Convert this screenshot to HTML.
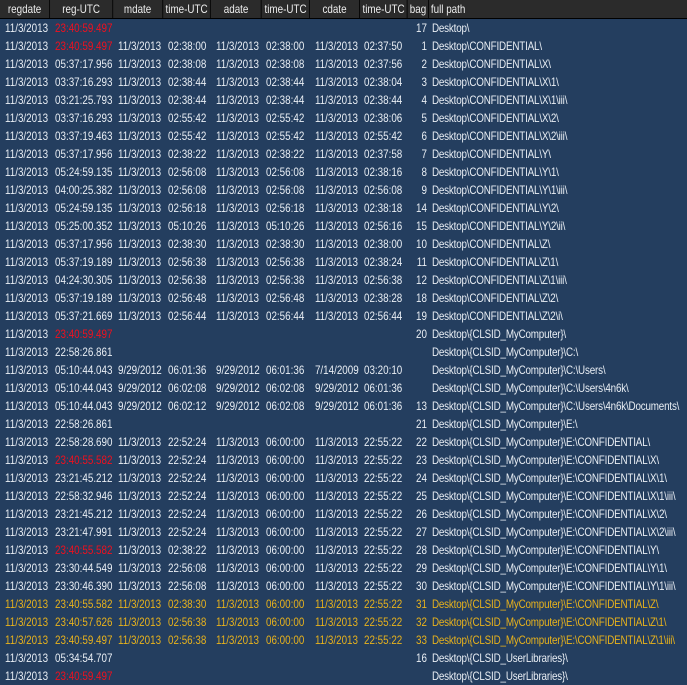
<!DOCTYPE html>
<html><head><style>
html,body{margin:0;padding:0;background:#243e5f;width:687px;height:685px;overflow:hidden}
#w{width:838px;transform:scaleX(0.82);transform-origin:0 0;font-family:"Liberation Sans",sans-serif;font-size:12px;color:#e9eef4}
.h,.r0{display:flex;white-space:nowrap}
.h{background:#2b2b2b;height:19px;line-height:18px;color:#eee;border-bottom:1px solid #000;box-sizing:border-box}
.h span{border-right:1.2px solid #000;text-align:center;box-sizing:border-box}
.h span:last-child{border-right:none;text-align:left;padding-left:2.4px}
.r0{height:18px;line-height:18px}
span{display:block;overflow:hidden;flex:none}
span:nth-child(1){width:61px}span:nth-child(2){width:76.8px}span:nth-child(3){width:61px}span:nth-child(4){width:58.5px}
span:nth-child(5){width:62.2px}span:nth-child(6){width:58.5px}span:nth-child(7){width:61px}span:nth-child(8){width:58.5px}
span:nth-child(9){width:25.6px}span:nth-child(10){width:314.6px}
.r0 span{padding-left:6.1px;box-sizing:border-box}
.r0 span:nth-child(6),.r0 span:nth-child(8){padding-left:4.9px}
.r0 span:nth-child(9){text-align:right;padding:0 2.4px 0 0}
.r0 span:nth-child(10){padding-left:3.7px;overflow:visible;letter-spacing:-0.22px}
.r{color:#f0101e}
.y{color:#e8b21c}
</style></head><body><div id="w">
<div class="h"><span>regdate</span><span>reg-UTC</span><span>mdate</span><span>time-UTC</span><span>adate</span><span>time-UTC</span><span>cdate</span><span>time-UTC</span><span>bag</span><span>full path</span></div>
<div class="r0"><span>11/3/2013</span><span class="r">23:40:59.497</span><span></span><span></span><span></span><span></span><span></span><span></span><span>17</span><span>Desktop\</span></div>
<div class="r0"><span>11/3/2013</span><span class="r">23:40:59.497</span><span>11/3/2013</span><span>02:38:00</span><span>11/3/2013</span><span>02:38:00</span><span>11/3/2013</span><span>02:37:50</span><span>1</span><span>Desktop\CONFIDENTIAL\</span></div>
<div class="r0"><span>11/3/2013</span><span>05:37:17.956</span><span>11/3/2013</span><span>02:38:08</span><span>11/3/2013</span><span>02:38:08</span><span>11/3/2013</span><span>02:37:56</span><span>2</span><span>Desktop\CONFIDENTIAL\X\</span></div>
<div class="r0"><span>11/3/2013</span><span>03:37:16.293</span><span>11/3/2013</span><span>02:38:44</span><span>11/3/2013</span><span>02:38:44</span><span>11/3/2013</span><span>02:38:04</span><span>3</span><span>Desktop\CONFIDENTIAL\X\1\</span></div>
<div class="r0"><span>11/3/2013</span><span>03:21:25.793</span><span>11/3/2013</span><span>02:38:44</span><span>11/3/2013</span><span>02:38:44</span><span>11/3/2013</span><span>02:38:44</span><span>4</span><span>Desktop\CONFIDENTIAL\X\1\iii\</span></div>
<div class="r0"><span>11/3/2013</span><span>03:37:16.293</span><span>11/3/2013</span><span>02:55:42</span><span>11/3/2013</span><span>02:55:42</span><span>11/3/2013</span><span>02:38:06</span><span>5</span><span>Desktop\CONFIDENTIAL\X\2\</span></div>
<div class="r0"><span>11/3/2013</span><span>03:37:19.463</span><span>11/3/2013</span><span>02:55:42</span><span>11/3/2013</span><span>02:55:42</span><span>11/3/2013</span><span>02:55:42</span><span>6</span><span>Desktop\CONFIDENTIAL\X\2\iii\</span></div>
<div class="r0"><span>11/3/2013</span><span>05:37:17.956</span><span>11/3/2013</span><span>02:38:22</span><span>11/3/2013</span><span>02:38:22</span><span>11/3/2013</span><span>02:37:58</span><span>7</span><span>Desktop\CONFIDENTIAL\Y\</span></div>
<div class="r0"><span>11/3/2013</span><span>05:24:59.135</span><span>11/3/2013</span><span>02:56:08</span><span>11/3/2013</span><span>02:56:08</span><span>11/3/2013</span><span>02:38:16</span><span>8</span><span>Desktop\CONFIDENTIAL\Y\1\</span></div>
<div class="r0"><span>11/3/2013</span><span>04:00:25.382</span><span>11/3/2013</span><span>02:56:08</span><span>11/3/2013</span><span>02:56:08</span><span>11/3/2013</span><span>02:56:08</span><span>9</span><span>Desktop\CONFIDENTIAL\Y\1\iii\</span></div>
<div class="r0"><span>11/3/2013</span><span>05:24:59.135</span><span>11/3/2013</span><span>02:56:18</span><span>11/3/2013</span><span>02:56:18</span><span>11/3/2013</span><span>02:38:18</span><span>14</span><span>Desktop\CONFIDENTIAL\Y\2\</span></div>
<div class="r0"><span>11/3/2013</span><span>05:25:00.352</span><span>11/3/2013</span><span>05:10:26</span><span>11/3/2013</span><span>05:10:26</span><span>11/3/2013</span><span>02:56:16</span><span>15</span><span>Desktop\CONFIDENTIAL\Y\2\ii\</span></div>
<div class="r0"><span>11/3/2013</span><span>05:37:17.956</span><span>11/3/2013</span><span>02:38:30</span><span>11/3/2013</span><span>02:38:30</span><span>11/3/2013</span><span>02:38:00</span><span>10</span><span>Desktop\CONFIDENTIAL\Z\</span></div>
<div class="r0"><span>11/3/2013</span><span>05:37:19.189</span><span>11/3/2013</span><span>02:56:38</span><span>11/3/2013</span><span>02:56:38</span><span>11/3/2013</span><span>02:38:24</span><span>11</span><span>Desktop\CONFIDENTIAL\Z\1\</span></div>
<div class="r0"><span>11/3/2013</span><span>04:24:30.305</span><span>11/3/2013</span><span>02:56:38</span><span>11/3/2013</span><span>02:56:38</span><span>11/3/2013</span><span>02:56:38</span><span>12</span><span>Desktop\CONFIDENTIAL\Z\1\iii\</span></div>
<div class="r0"><span>11/3/2013</span><span>05:37:19.189</span><span>11/3/2013</span><span>02:56:48</span><span>11/3/2013</span><span>02:56:48</span><span>11/3/2013</span><span>02:38:28</span><span>18</span><span>Desktop\CONFIDENTIAL\Z\2\</span></div>
<div class="r0"><span>11/3/2013</span><span>05:37:21.669</span><span>11/3/2013</span><span>02:56:44</span><span>11/3/2013</span><span>02:56:44</span><span>11/3/2013</span><span>02:56:44</span><span>19</span><span>Desktop\CONFIDENTIAL\Z\2\i\</span></div>
<div class="r0"><span>11/3/2013</span><span class="r">23:40:59.497</span><span></span><span></span><span></span><span></span><span></span><span></span><span>20</span><span>Desktop\{CLSID_MyComputer}\</span></div>
<div class="r0"><span>11/3/2013</span><span>22:58:26.861</span><span></span><span></span><span></span><span></span><span></span><span></span><span></span><span>Desktop\{CLSID_MyComputer}\C:\</span></div>
<div class="r0"><span>11/3/2013</span><span>05:10:44.043</span><span>9/29/2012</span><span>06:01:36</span><span>9/29/2012</span><span>06:01:36</span><span>7/14/2009</span><span>03:20:10</span><span></span><span>Desktop\{CLSID_MyComputer}\C:\Users\</span></div>
<div class="r0"><span>11/3/2013</span><span>05:10:44.043</span><span>9/29/2012</span><span>06:02:08</span><span>9/29/2012</span><span>06:02:08</span><span>9/29/2012</span><span>06:01:36</span><span></span><span>Desktop\{CLSID_MyComputer}\C:\Users\4n6k\</span></div>
<div class="r0"><span>11/3/2013</span><span>05:10:44.043</span><span>9/29/2012</span><span>06:02:12</span><span>9/29/2012</span><span>06:02:08</span><span>9/29/2012</span><span>06:01:36</span><span>13</span><span>Desktop\{CLSID_MyComputer}\C:\Users\4n6k\Documents\</span></div>
<div class="r0"><span>11/3/2013</span><span>22:58:26.861</span><span></span><span></span><span></span><span></span><span></span><span></span><span>21</span><span>Desktop\{CLSID_MyComputer}\E:\</span></div>
<div class="r0"><span>11/3/2013</span><span>22:58:28.690</span><span>11/3/2013</span><span>22:52:24</span><span>11/3/2013</span><span>06:00:00</span><span>11/3/2013</span><span>22:55:22</span><span>22</span><span>Desktop\{CLSID_MyComputer}\E:\CONFIDENTIAL\</span></div>
<div class="r0"><span>11/3/2013</span><span class="r">23:40:55.582</span><span>11/3/2013</span><span>22:52:24</span><span>11/3/2013</span><span>06:00:00</span><span>11/3/2013</span><span>22:55:22</span><span>23</span><span>Desktop\{CLSID_MyComputer}\E:\CONFIDENTIAL\X\</span></div>
<div class="r0"><span>11/3/2013</span><span>23:21:45.212</span><span>11/3/2013</span><span>22:52:24</span><span>11/3/2013</span><span>06:00:00</span><span>11/3/2013</span><span>22:55:22</span><span>24</span><span>Desktop\{CLSID_MyComputer}\E:\CONFIDENTIAL\X\1\</span></div>
<div class="r0"><span>11/3/2013</span><span>22:58:32.946</span><span>11/3/2013</span><span>22:52:24</span><span>11/3/2013</span><span>06:00:00</span><span>11/3/2013</span><span>22:55:22</span><span>25</span><span>Desktop\{CLSID_MyComputer}\E:\CONFIDENTIAL\X\1\iii\</span></div>
<div class="r0"><span>11/3/2013</span><span>23:21:45.212</span><span>11/3/2013</span><span>22:52:24</span><span>11/3/2013</span><span>06:00:00</span><span>11/3/2013</span><span>22:55:22</span><span>26</span><span>Desktop\{CLSID_MyComputer}\E:\CONFIDENTIAL\X\2\</span></div>
<div class="r0"><span>11/3/2013</span><span>23:21:47.991</span><span>11/3/2013</span><span>22:52:24</span><span>11/3/2013</span><span>06:00:00</span><span>11/3/2013</span><span>22:55:22</span><span>27</span><span>Desktop\{CLSID_MyComputer}\E:\CONFIDENTIAL\X\2\iii\</span></div>
<div class="r0"><span>11/3/2013</span><span class="r">23:40:55.582</span><span>11/3/2013</span><span>02:38:22</span><span>11/3/2013</span><span>06:00:00</span><span>11/3/2013</span><span>22:55:22</span><span>28</span><span>Desktop\{CLSID_MyComputer}\E:\CONFIDENTIAL\Y\</span></div>
<div class="r0"><span>11/3/2013</span><span>23:30:44.549</span><span>11/3/2013</span><span>22:56:08</span><span>11/3/2013</span><span>06:00:00</span><span>11/3/2013</span><span>22:55:22</span><span>29</span><span>Desktop\{CLSID_MyComputer}\E:\CONFIDENTIAL\Y\1\</span></div>
<div class="r0"><span>11/3/2013</span><span>23:30:46.390</span><span>11/3/2013</span><span>22:56:08</span><span>11/3/2013</span><span>06:00:00</span><span>11/3/2013</span><span>22:55:22</span><span>30</span><span>Desktop\{CLSID_MyComputer}\E:\CONFIDENTIAL\Y\1\iii\</span></div>
<div class="r0 y"><span>11/3/2013</span><span>23:40:55.582</span><span>11/3/2013</span><span>02:38:30</span><span>11/3/2013</span><span>06:00:00</span><span>11/3/2013</span><span>22:55:22</span><span>31</span><span>Desktop\{CLSID_MyComputer}\E:\CONFIDENTIAL\Z\</span></div>
<div class="r0 y"><span>11/3/2013</span><span>23:40:57.626</span><span>11/3/2013</span><span>02:56:38</span><span>11/3/2013</span><span>06:00:00</span><span>11/3/2013</span><span>22:55:22</span><span>32</span><span>Desktop\{CLSID_MyComputer}\E:\CONFIDENTIAL\Z\1\</span></div>
<div class="r0 y"><span>11/3/2013</span><span>23:40:59.497</span><span>11/3/2013</span><span>02:56:38</span><span>11/3/2013</span><span>06:00:00</span><span>11/3/2013</span><span>22:55:22</span><span>33</span><span>Desktop\{CLSID_MyComputer}\E:\CONFIDENTIAL\Z\1\iii\</span></div>
<div class="r0"><span>11/3/2013</span><span>05:34:54.707</span><span></span><span></span><span></span><span></span><span></span><span></span><span>16</span><span>Desktop\{CLSID_UserLibraries}\</span></div>
<div class="r0"><span>11/3/2013</span><span class="r">23:40:59.497</span><span></span><span></span><span></span><span></span><span></span><span></span><span></span><span>Desktop\{CLSID_UserLibraries}\</span></div>
</div></body></html>
